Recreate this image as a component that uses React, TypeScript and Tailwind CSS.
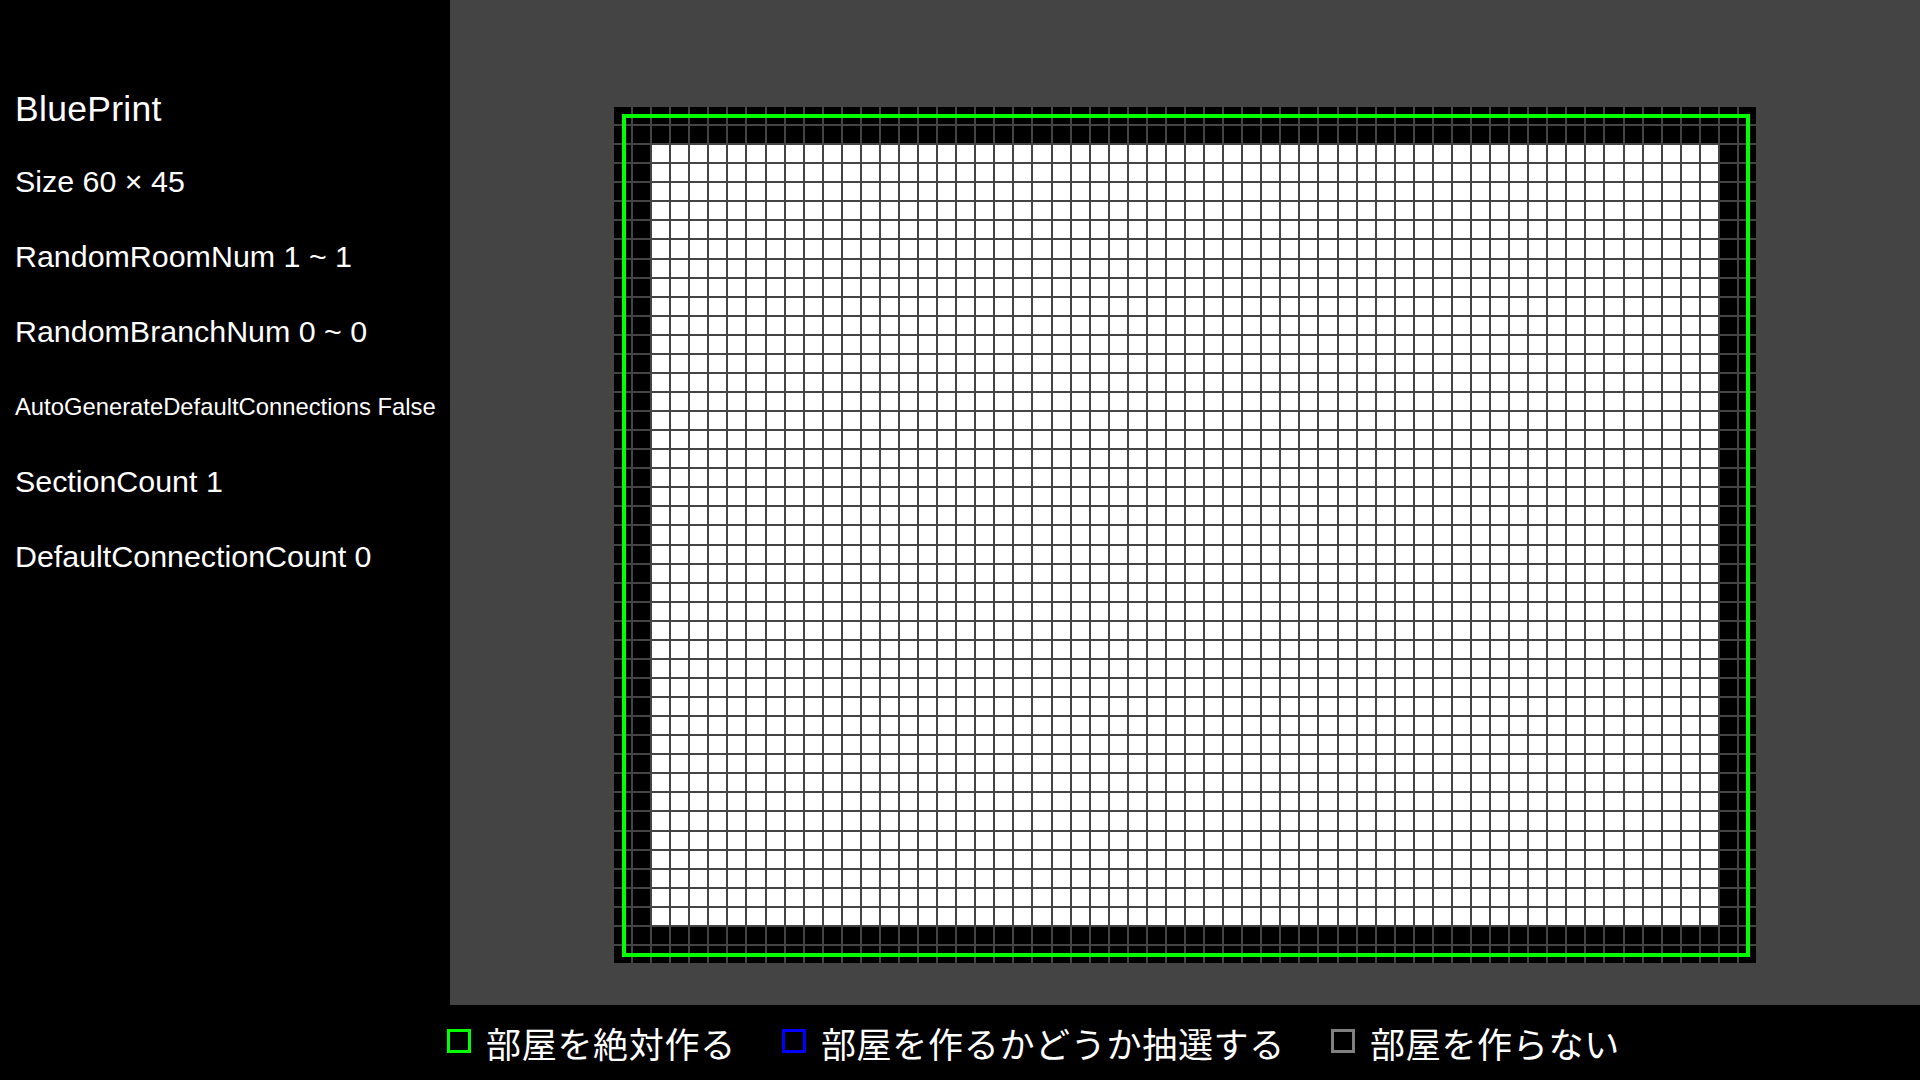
import React from "react";

const COLS = 60;
const ROWS = 45;
const BORDER = 2;

const stats = [
  { label: "Size 60 × 45", size: "text-[30.4px]" },
  { label: "RandomRoomNum 1 ~ 1", size: "text-[30.4px]" },
  { label: "RandomBranchNum 0 ~ 0", size: "text-[30.4px]" },
  { label: "AutoGenerateDefaultConnections False", size: "text-[23.8px]" },
  { label: "SectionCount 1", size: "text-[30.4px]" },
  { label: "DefaultConnectionCount 0", size: "text-[30.4px]" },
];

const legend = [
  { label: "部屋を絶対作る", box: "border-[#00ff00]" },
  { label: "部屋を作るかどうか抽選する", box: "border-[#0000ff]" },
  { label: "部屋を作らない", box: "border-[#808080]" },
];

function Cell({ wall }: { wall: boolean }) {
  return <div className={wall ? "bg-black" : "bg-white"} />;
}

function Blueprint() {
  const cells = [];
  for (let y = 0; y < ROWS; y++) {
    for (let x = 0; x < COLS; x++) {
      const wall = x < BORDER || y < BORDER || x >= COLS - BORDER || y >= ROWS - BORDER;
      cells.push(<Cell key={`${x}-${y}`} wall={wall} />);
    }
  }

  return (
    <div className="relative w-[1142px] h-[856px]">
      <div className="grid w-full h-full gap-[2px] grid-cols-[repeat(60,minmax(0,1fr))] grid-rows-[repeat(45,minmax(0,1fr))]">
        {cells}
      </div>
      {/* always-create area */}
      <div className="absolute left-[8px] top-[7px] right-[6px] bottom-[6px] border-[4px] border-[#00ff00]" />
    </div>
  );
}

export default function App() {
  return (
    <div className="w-[1920px] h-[1080px] flex flex-col bg-black text-white font-['Liberation_Sans',Arial,sans-serif] overflow-hidden">
      <div className="flex h-[1005px]">
        {/* ── Info panel ── */}
        <aside className="w-[450px] shrink-0 bg-black pt-[76px] pl-[15px]">
          <div className="h-[68px] flex items-center text-[35.5px] tracking-[0.3px] leading-none">BluePrint</div>
          {stats.map((s) => (
            <div key={s.label} className={`h-[75px] flex items-center leading-none whitespace-nowrap ${s.size}`}>
              {s.label}
            </div>
          ))}
        </aside>

        {/* ── Map view ── */}
        <main className="flex-1 bg-[#444444] flex justify-center items-start pt-[107px]">
          <Blueprint />
        </main>
      </div>

      {/* ── Legend ── */}
      <div className="h-[75px] flex items-center pl-[447px] gap-[46px] font-['Noto_Sans_CJK_JP',sans-serif] text-[35px] tracking-[0.7px] leading-none">
        {legend.map((l) => (
          <div key={l.label} className="flex items-center gap-[15px]">
            <div className={`w-[24px] h-[24px] border-[3px] -mt-[4px] ${l.box}`} />
            <span className="whitespace-nowrap">{l.label}</span>
          </div>
        ))}
      </div>
    </div>
  );
}
